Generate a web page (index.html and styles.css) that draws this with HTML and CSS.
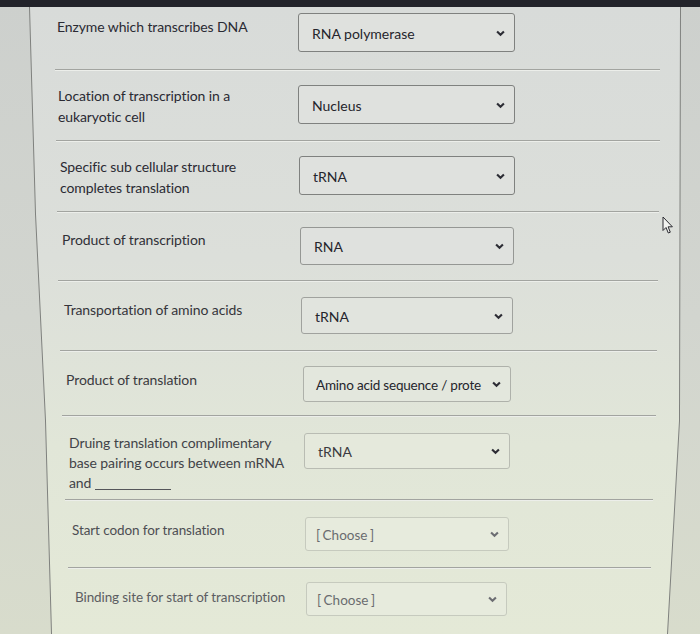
FILE: index.html
```html
<!DOCTYPE html>
<html>
<head>
<meta charset="utf-8">
<link rel="stylesheet" href="styles.css">
</head>
<body>
<div class="topbar"></div>
<div class="frame">
  <div class="panel">
    <div class="row r1">
      <div class="label">Enzyme which transcribes DNA</div>
      <div class="select"><span>RNA polymerase</span><svg class="chev" viewBox="0 0 10 7"><path d="M1.2 1.2 L5 5 L8.8 1.2"/></svg></div>
    </div>
    <div class="row r2">
      <div class="label">Location of transcription in a<br>eukaryotic cell</div>
      <div class="select"><span>Nucleus</span><svg class="chev" viewBox="0 0 10 7"><path d="M1.2 1.2 L5 5 L8.8 1.2"/></svg></div>
    </div>
    <div class="row r3">
      <div class="label">Specific sub cellular structure<br>completes translation</div>
      <div class="select"><span>tRNA</span><svg class="chev" viewBox="0 0 10 7"><path d="M1.2 1.2 L5 5 L8.8 1.2"/></svg></div>
    </div>
    <div class="row r4">
      <div class="label">Product of transcription</div>
      <div class="select"><span>RNA</span><svg class="chev" viewBox="0 0 10 7"><path d="M1.2 1.2 L5 5 L8.8 1.2"/></svg></div>
    </div>
    <div class="row r5">
      <div class="label">Transportation of amino acids</div>
      <div class="select"><span>tRNA</span><svg class="chev" viewBox="0 0 10 7"><path d="M1.2 1.2 L5 5 L8.8 1.2"/></svg></div>
    </div>
    <div class="row r6">
      <div class="label">Product of translation</div>
      <div class="select"><span>Amino acid sequence / prote</span><svg class="chev" viewBox="0 0 10 7"><path d="M1.2 1.2 L5 5 L8.8 1.2"/></svg></div>
    </div>
    <div class="row r7">
      <div class="label">Druing translation complimentary<br>base pairing occurs between mRNA<br>and <span class="blank"></span></div>
      <div class="select"><span>tRNA</span><svg class="chev" viewBox="0 0 10 7"><path d="M1.2 1.2 L5 5 L8.8 1.2"/></svg></div>
    </div>
    <div class="row r8">
      <div class="label">Start codon for translation</div>
      <div class="select choose"><span>[ Choose ]</span><svg class="chev" viewBox="0 0 10 7"><path d="M1.2 1.2 L5 5 L8.8 1.2"/></svg></div>
    </div>
    <div class="row r9">
      <div class="label">Binding site for start of transcription</div>
      <div class="select choose"><span>[ Choose ]</span><svg class="chev" viewBox="0 0 10 7"><path d="M1.2 1.2 L5 5 L8.8 1.2"/></svg></div>
    </div>
  </div>
  <svg class="cursor" viewBox="0 0 12 19"><path d="M1 1 L1 14.5 L4 11.5 L6.3 17 L8.3 16.2 L6.1 10.8 L10.4 10.8 Z"/></svg>
</div>
</body>
</html>
```
FILE: styles.css
```css
html, body {
  margin: 0;
  padding: 0;
}
body {
  width: 700px;
  height: 634px;
  overflow: hidden;
  background: linear-gradient(180deg, #cdd0cd 0%, #d2d5cf 50%, #d8dccc 100%);
  font-family: Lato, "Open Sans", sans-serif;
  color: #2a2a33;
}
.topbar {
  height: 7px;
  background: #22232a;
}
.frame {
  position: relative;
  height: 627px;
  background: #7f817e;
  clip-path: polygon(29px 0, 681px 0, 680px 66%, 668px 100%, 51px 100%, 45px 66%, 35px 33%);
}
.panel {
  height: 627px;
  background: linear-gradient(180deg, #d8dbd9 0%, #dcdfda 40%, #e1e6d8 70%, #e4e9d7 100%);
  clip-path: polygon(30px 0, 680px 0, 679px 66%, 667px 100%, 52px 100%, 46px 66%, 36px 33%);
}
.row {
  display: flex;
  align-items: flex-start;
  box-sizing: border-box;
  border-bottom: 1px solid #a2a4a0;
  box-shadow: 0 1px 0 #eceeea;
}
.label {
  flex: none;
  box-sizing: border-box;
  font-size: 14px;
  line-height: 21px;
  letter-spacing: -0.1px;
}
.select {
  flex: none;
  box-sizing: border-box;
  border: 1px solid #7f817f;
  border-radius: 3px;
  background: #dfe1de;
  display: flex;
  align-items: center;
  justify-content: space-between;
  padding: 1px 9px 0 13px;
  font-size: 14px;
  color: #25252c;
}
.chev {
  width: 9px;
  height: 7px;
  fill: none;
  stroke: #2d2d35;
  stroke-width: 2.3;
  flex: none;
}

/* per-row geometry (photo perspective) */
.r1 { margin-left: 55px; width: 605px; height: 63px; padding-top: 6px; }
.r1 .label { width: 243px; padding-left: 2px; margin-top: 3px; }
.r1 .select { width: 217px; height: 39px; }

.r2 { margin-left: 56px; width: 604px; height: 71px; padding-top: 15px; }
.r2 .label { width: 242px; padding-left: 2px; margin-top: 0; }
.r2 .select { width: 217px; height: 39px; }

.r3 { margin-left: 57px; width: 602px; height: 71px; padding-top: 15px; }
.r3 .label { width: 242px; padding-left: 3px; margin-top: 0; }
.r3 .select { width: 216px; height: 39px; }

.r4 { margin-left: 58px; width: 600px; height: 69px; padding-top: 15px; }
.r4 .label { width: 242px; padding-left: 4px; margin-top: 2px; color: #303037; }
.r4 .select { width: 214px; height: 38px; border-color: #959794; }

.r5 { margin-left: 60px; width: 597px; height: 70px; padding-top: 16px; }
.r5 .label { width: 241px; padding-left: 4px; margin-top: 2px; color: #35353b; }
.r5 .select { width: 212px; height: 37px; border-color: #a0a29e; background: #e1e4de; }

.r6 { margin-left: 62px; width: 594px; height: 65px; padding-top: 15px; }
.r6 .label { width: 241px; padding-left: 4px; margin-top: 3px; color: #3a3a40; }
.r6 .select { width: 208px; height: 36px; border-color: #aeb1aa; background: #e3e7dd; font-size: 13.5px; letter-spacing: -0.2px; padding-left: 12px; }

.r7 { margin-left: 65px; width: 588px; height: 84px; padding-top: 17px; }
.r7 .label { width: 239px; padding-left: 4px; margin-top: 0; line-height: 20px; color: #424348; }
.r7 .select { width: 206px; height: 36px; border-color: #b9bcb3; background: #e5e9dc; color: #3a3a40; }

.r8 { margin-left: 68px; width: 583px; height: 68px; padding-top: 17px; }
.r8 .label { width: 237px; padding-left: 4px; margin-top: 3px; color: #4d4e53; font-size: 13.5px; }
.r8 .select { width: 204px; height: 34px; }

.r9 { margin-left: 70px; width: 580px; height: 60px; padding-top: 14px; border-bottom: none; box-shadow: none; }
.r9 .label { width: 236px; padding-left: 5px; margin-top: 5px; color: #5c5d62; font-size: 13.5px; }
.r9 .select { width: 201px; height: 34px; }

.select.choose {
  border-color: #c6cabe;
  background: #e7ebdd;
  color: #6a6b6f;
  font-size: 13.5px;
  padding-left: 10px;
  word-spacing: -1px;
}
.select.choose .chev {
  stroke: #6c6d72;
}
.blank {
  display: inline-block;
  width: 76px;
  border-bottom: 1px solid #55565a;
  vertical-align: -2px;
}
.cursor {
  position: absolute;
  left: 662px;
  top: 209px;
  width: 12px;
  height: 19px;
  fill: #f2f3f0;
  stroke: #2a2a30;
  stroke-width: 1;
}
```
